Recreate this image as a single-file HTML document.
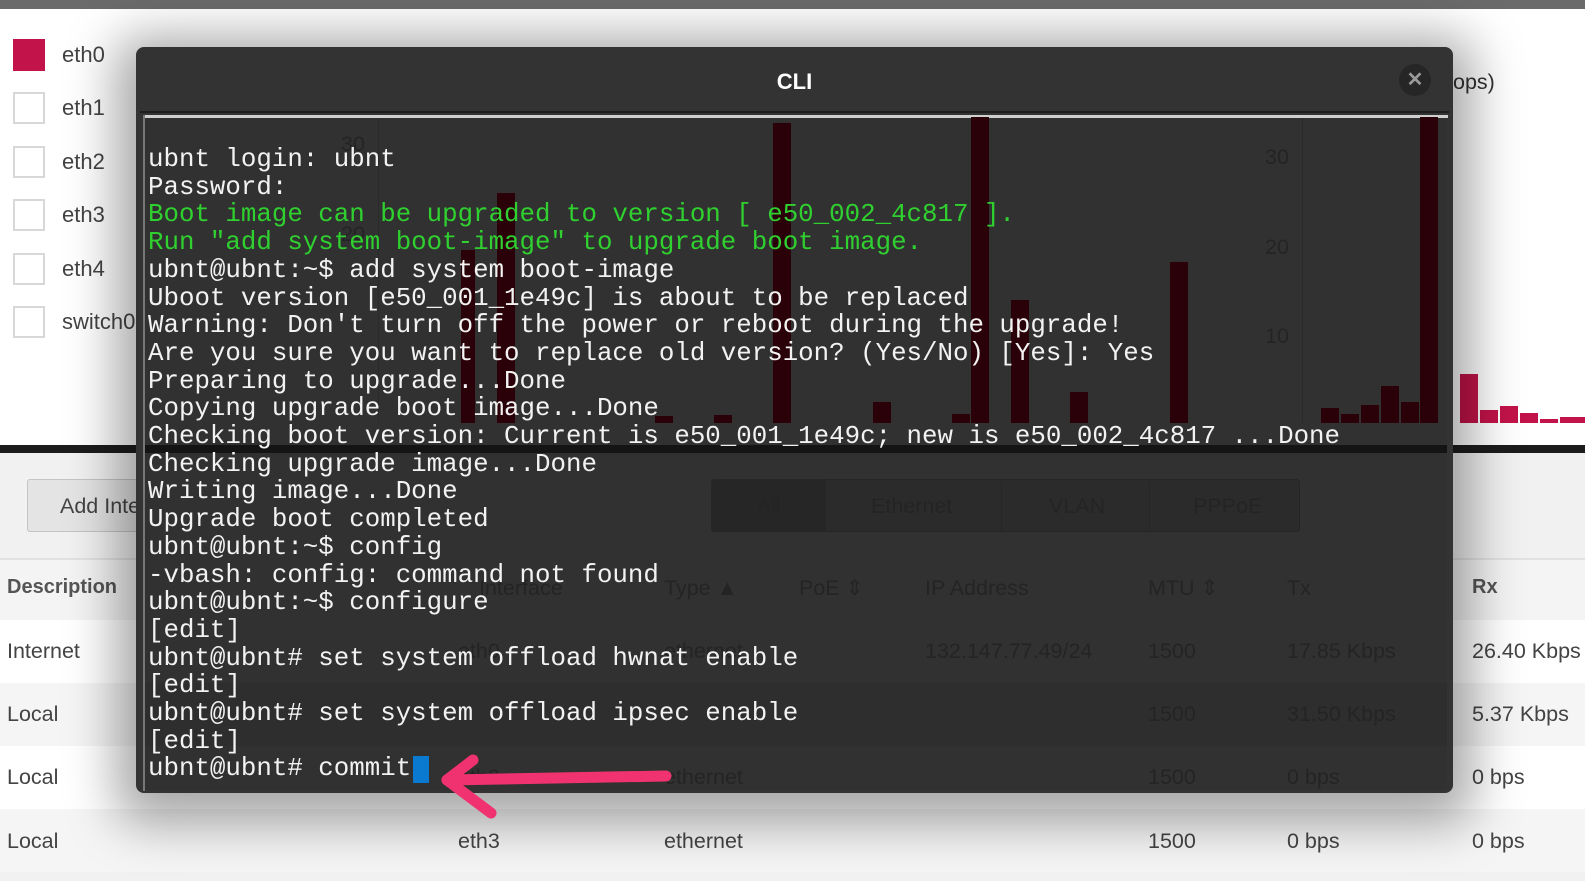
<!DOCTYPE html>
<html><head><meta charset="utf-8"><style>
*{margin:0;padding:0;box-sizing:border-box}
body{width:1585px;height:881px;overflow:hidden;position:relative;background:#fff;font-family:"Liberation Sans",sans-serif;color:#444}
.a{position:absolute}
.cb{position:absolute;left:13px;width:32px;height:32px;border:2px solid #d8d8d8;background:#fff}
.lg{position:absolute;left:62px;font-size:22px;color:#444}
.row{position:absolute;left:0;width:1585px;height:63px}
.t{position:absolute;font-size:21.5px;color:#444}
.term{position:absolute;left:148px;top:146px;font-family:"Liberation Mono",monospace;font-size:25.8px;line-height:27.7px;color:#f2f2f2;white-space:pre}
.g{color:#2fd02f}
.bar{position:absolute;background:#2a0009}
.rb{position:absolute;background:#c2134a}
.f{position:absolute;color:#242424;font-size:21.5px}
</style></head><body>
<div class="a" style="left:0;top:0;width:1585px;height:9px;background:#6b6b6b"></div>
<div class="cb" style="top:39px;background:#c2134a;border-color:#c2134a"></div><div class="lg" style="top:42px">eth0</div>
<div class="cb" style="top:92px"></div><div class="lg" style="top:95px">eth1</div>
<div class="cb" style="top:146px"></div><div class="lg" style="top:149px">eth2</div>
<div class="cb" style="top:199px"></div><div class="lg" style="top:202px">eth3</div>
<div class="cb" style="top:253px"></div><div class="lg" style="top:256px">eth4</div>
<div class="cb" style="top:306px"></div><div class="lg" style="top:309px">switch0</div>
<div class="t" style="left:1453px;top:70px;color:#333">ops)</div>
<div class="rb" style="left:1460px;top:374px;width:18px;height:49px"></div>
<div class="rb" style="left:1480px;top:410px;width:18px;height:13px"></div>
<div class="rb" style="left:1500px;top:406px;width:18px;height:17px"></div>
<div class="rb" style="left:1520px;top:413px;width:18px;height:10px"></div>
<div class="rb" style="left:1540px;top:419px;width:18px;height:4px"></div>
<div class="rb" style="left:1560px;top:417px;width:25px;height:6px"></div>
<div class="a" style="left:0;top:445px;width:1585px;height:8px;background:#1c1c1c"></div>
<div class="a" style="left:0;top:453px;width:1585px;height:428px;background:#f1f1f1"></div>
<div class="a" style="left:27px;top:479px;width:200px;height:53px;background:#e4e4e4;border:1px solid #c4c4c4;border-radius:3px"></div>
<div class="t" style="left:60px;top:494px">Add Interface</div>
<div class="row" style="top:558px;background:#f4f4f4;border-top:2px solid #e2e2e2"></div>
<div class="t" style="left:7px;top:576px;font-weight:bold;color:#555;font-size:20px">Description</div>
<div class="t" style="left:1472px;top:576px;font-weight:bold;color:#555;font-size:20px">Rx</div>
<div class="row" style="top:620px;background:#fff"></div>
<div class="row" style="top:683px;background:#f5f5f5"></div>
<div class="row" style="top:746px;background:#fff"></div>
<div class="row" style="top:809px;background:#f5f5f5"></div>
<div class="t" style="left:7px;top:639px">Internet</div><div class="t" style="left:1472px;top:639px">26.40 Kbps</div>
<div class="t" style="left:7px;top:702px">Local</div><div class="t" style="left:1472px;top:702px">5.37 Kbps</div>
<div class="t" style="left:7px;top:765px">Local</div><div class="t" style="left:1472px;top:765px">0 bps</div>
<div class="t" style="left:7px;top:829px">Local</div><div class="t" style="left:458px;top:829px">eth3</div><div class="t" style="left:664px;top:829px">ethernet</div><div class="t" style="left:1148px;top:829px">1500</div><div class="t" style="left:1287px;top:829px">0 bps</div><div class="t" style="left:1472px;top:829px">0 bps</div>
<div class="a" style="left:136px;top:47px;width:1317px;height:746px;background:#333;border-radius:8px;box-shadow:0 10px 50px 20px rgba(0,0,0,.35)"></div>
<div class="a" style="left:136px;top:62px;width:1317px;height:40px;text-align:center;color:#fff;font-weight:bold;font-size:22px;line-height:40px">CLI</div>
<div class="a" style="left:1399px;top:64px;width:32px;height:32px;border-radius:50%;background:#262626;color:#999;text-align:center;line-height:32px;font-size:20px;font-weight:bold">✕</div>
<div class="a" style="left:140px;top:111px;width:1309px;height:2px;background:#1e1e1e"></div>
<div class="a" style="left:143px;top:115px;width:1305px;height:3px;background:#cfcfcf"></div>
<div class="a" style="left:143px;top:115px;width:2px;height:676px;background:#777"></div>
<div class="a" style="left:145px;top:118px;width:1302px;height:672px;background:#313131"></div>
<div class="a" style="left:378px;top:118px;width:1px;height:305px;background:#2a2a2a"></div>
<div class="a" style="left:1302px;top:118px;width:1px;height:305px;background:#2a2a2a"></div>
<div class="f" style="left:1265px;top:145px">30</div><div class="f" style="left:1265px;top:235px">20</div><div class="f" style="left:1265px;top:324px">10</div>
<div class="f" style="left:341px;top:132px">30</div><div class="f" style="left:341px;top:222px">20</div>
<div class="bar" style="left:497px;top:193px;width:18px;height:230px"></div>
<div class="bar" style="left:461px;top:250px;width:14px;height:173px"></div>
<div class="bar" style="left:773px;top:123px;width:18px;height:300px"></div>
<div class="bar" style="left:971px;top:117px;width:18px;height:306px"></div>
<div class="bar" style="left:1011px;top:300px;width:18px;height:123px"></div>
<div class="bar" style="left:1170px;top:262px;width:18px;height:161px"></div>
<div class="bar" style="left:1420px;top:117px;width:18px;height:306px"></div>
<div class="bar" style="left:873px;top:402px;width:18px;height:21px"></div>
<div class="bar" style="left:1070px;top:392px;width:18px;height:31px"></div>
<div class="bar" style="left:1321px;top:408px;width:18px;height:15px"></div>
<div class="bar" style="left:1341px;top:414px;width:18px;height:9px"></div>
<div class="bar" style="left:1361px;top:405px;width:18px;height:18px"></div>
<div class="bar" style="left:1381px;top:386px;width:18px;height:37px"></div>
<div class="bar" style="left:1401px;top:402px;width:18px;height:21px"></div>
<div class="bar" style="left:655px;top:416px;width:18px;height:7px"></div>
<div class="bar" style="left:714px;top:415px;width:18px;height:8px"></div>
<div class="bar" style="left:952px;top:414px;width:18px;height:9px"></div>
<div class="a" style="left:145px;top:445px;width:1302px;height:8px;background:#141414"></div>
<div class="a" style="left:711px;top:479px;width:589px;height:53px;background:#2b2b2b;border:1px solid #252525;border-radius:4px"></div>
<div class="a" style="left:711px;top:479px;width:115px;height:53px;background:#262626;border-radius:4px 0 0 4px"></div>
<div class="a" style="left:1001px;top:481px;width:1px;height:50px;background:#262626"></div>
<div class="a" style="left:1149px;top:481px;width:1px;height:50px;background:#262626"></div>
<div class="f" style="left:757px;top:494px">All</div><div class="f" style="left:871px;top:494px">Ethernet</div><div class="f" style="left:1049px;top:494px">VLAN</div><div class="f" style="left:1193px;top:494px">PPPoE</div>
<div class="f" style="left:479px;top:576px">Interface</div><div class="f" style="left:664px;top:576px">Type ▲</div><div class="f" style="left:799px;top:576px">PoE ⇕</div><div class="f" style="left:925px;top:576px">IP Address</div><div class="f" style="left:1148px;top:576px">MTU ⇕</div><div class="f" style="left:1287px;top:576px">Tx</div>
<div class="a" style="left:145px;top:683px;width:1302px;height:63px;background:#2e2e2e"></div>
<div class="f" style="left:458px;top:639px">eth0</div><div class="f" style="left:664px;top:639px">ethernet</div>
<div class="f" style="left:925px;top:639px">132.147.77.49/24</div><div class="f" style="left:1148px;top:639px">1500</div><div class="f" style="left:1287px;top:639px">17.85 Kbps</div>
<div class="f" style="left:1148px;top:702px">1500</div><div class="f" style="left:1287px;top:702px">31.50 Kbps</div>
<div class="f" style="left:458px;top:765px">eth2</div><div class="f" style="left:664px;top:765px">ethernet</div><div class="f" style="left:1148px;top:765px">1500</div><div class="f" style="left:1287px;top:765px">0 bps</div>
<div class="term">ubnt login: ubnt
Password:
<span class="g">Boot image can be upgraded to version [ e50_002_4c817 ].
Run "add system boot-image" to upgrade boot image.</span>
ubnt@ubnt:~$ add system boot-image
Uboot version [e50_001_1e49c] is about to be replaced
Warning: Don't turn off the power or reboot during the upgrade!
Are you sure you want to replace old version? (Yes/No) [Yes]: Yes
Preparing to upgrade...Done
Copying upgrade boot image...Done
Checking boot version: Current is e50_001_1e49c; new is e50_002_4c817 ...Done
Checking upgrade image...Done
Writing image...Done
Upgrade boot completed
ubnt@ubnt:~$ config
-vbash: config: command not found
ubnt@ubnt:~$ configure
[edit]
ubnt@ubnt# set system offload hwnat enable
[edit]
ubnt@ubnt# set system offload ipsec enable
[edit]
ubnt@ubnt# commit</div>
<div class="a" style="left:413px;top:756px;width:16px;height:27px;background:#0a7ad0"></div>
<svg class="a" style="left:0;top:0" width="1585" height="881"><g stroke="#f03370" stroke-width="11" stroke-linecap="round" fill="none"><path d="M447 780 L666 776"/><path d="M447 780 L473 760"/><path d="M447 780 L491 813"/></g></svg>
</body></html>
